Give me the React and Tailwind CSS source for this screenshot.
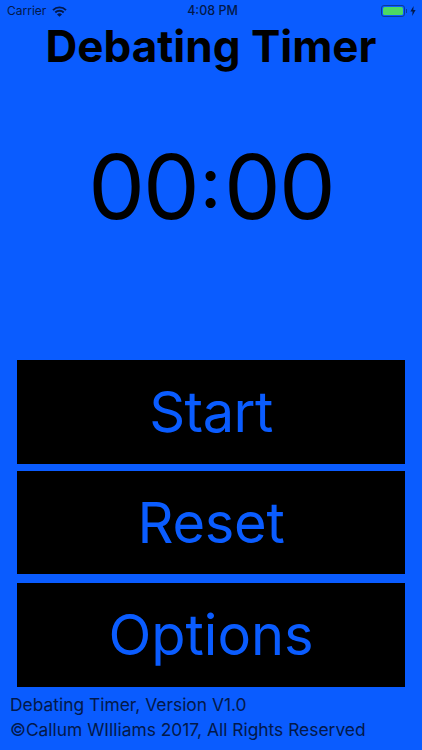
export default function App() {
  const font = "font-['Inter','Liberation_Sans',sans-serif]";
  return (
    <div className={`w-[422px] h-[750px] overflow-hidden bg-[#0a5cff] flex flex-col text-black ${font}`}>
      <div className="h-[22px] shrink-0 pl-[7px] pr-[6px] flex items-center justify-between text-[#03194a] text-[12px] relative">
        <div className="flex items-center gap-[6px]">
          <span>Carrier</span>
          <svg width="15" height="11" viewBox="0 0 15 11" fill="none" stroke="#03194a" strokeWidth="1.9">
            <path d="M1 4.2 A9 9 0 0 1 14 4.2" />
            <path d="M3.3 6.5 A6 6 0 0 1 11.7 6.5" />
            <path d="M7.5 10.8 L5 8.5 A3.6 3.6 0 0 1 10 8.5 Z" fill="#03194a" stroke="none" />
          </svg>
        </div>
        <span className="absolute left-0 right-0 text-center font-medium text-[12.5px] pl-[3px]">4:08 PM</span>
        <div className="flex items-center gap-[1px]">
          <div className="w-[24px] h-[12px] rounded-[3px] border border-[#0a3a9c] p-[1px]">
            <div className="w-full h-full rounded-[1.5px] bg-[#4cd964]" />
          </div>
          <div className="w-[1.5px] h-[4px] bg-[#0a3a9c] mr-[2px]" />
          <svg width="6" height="10" viewBox="0 0 6 10" fill="#03194a">
            <path d="M3.6 0 L0.4 5.6 H2.6 L2.2 10 L5.6 4 H3.3 Z" />
          </svg>
        </div>
      </div>
      <h1 className="text-center text-[44px] font-bold leading-[50px] mt-[-1px]">Debating Timer</h1>
      <div className="h-[100px] mt-[66px] text-center text-[90px] tracking-[-2px] leading-[100px] whitespace-nowrap">
        00<span className="text-[70px] font-medium leading-none align-[12px] tracking-[1px] mx-[2px]">:</span>00
      </div>
      <div className="flex flex-col px-[17px] mt-[123px]">
        <button className="h-[104px] bg-black text-[#0a5cff] text-[56px] tracking-[-0.5px]">Start</button>
        <button className="h-[103px] mt-[7px] bg-black text-[#0a5cff] text-[56px] tracking-[-0.3px]">Reset</button>
        <button className="h-[104px] mt-[9px] bg-black text-[#0a5cff] text-[56px]">Options</button>
      </div>
      <div className="pl-[10px] mt-[6px] text-[17.4px] leading-[24.5px] text-[#03194a]">
        <div>Debating Timer, Version V1.0</div>
        <div>©Callum WIlliams 2017, All Rights Reserved</div>
      </div>
    </div>
  );
}
